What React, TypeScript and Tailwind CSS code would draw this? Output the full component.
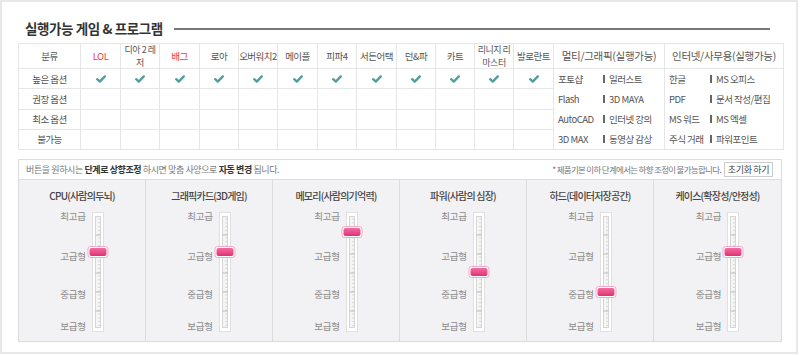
const games = [
  { name: "LOL", red: true },
  { name: "디아 2 레", name2: "저" },
  { name: "배그", red: true },
  { name: "로아" },
  { name: "오버워치2" },
  { name: "메이플" },
  { name: "피파4" },
  { name: "서든어택" },
  { name: "던&파" },
  { name: "카트" },
  { name: "리니지 리", name2: "마스터" },
  { name: "발로란트" },
];

const rows = ["높은 옵션", "권장 옵션", "최소 옵션", "불가능"];

const multi = [
  ["포토샵", "일러스트"],
  ["Flash", "3D MAYA"],
  ["AutoCAD", "인터넷 강의"],
  ["3D MAX", "동영상 감상"],
];

const office = [
  ["한글", "MS 오피스"],
  ["PDF", "문서 작성/편집"],
  ["MS 워드", "MS 엑셀"],
  ["주식 거래", "파워포인트"],
];

const parts = [
  { title: "CPU(사람의두뇌)", pos: 40 },
  { title: "그래픽카드(3D게임)", pos: 40 },
  { title: "메모리(사람의기억력)", pos: 20 },
  { title: "파워(사람의 심장)", pos: 60 },
  { title: "하드(데이터저장공간)", pos: 80 },
  { title: "케이스(확장성/안정성)", pos: 40 },
];

function Check() {
  return (
    <svg width="10" height="8" viewBox="0 0 10 8" className="mx-auto">
      <path
        d="M1.2 4.2 L3.8 6.6 L8.8 1.4"
        stroke="#4f9d9d"
        strokeWidth="2.3"
        fill="none"
        strokeLinecap="round"
        strokeLinejoin="round"
      />
    </svg>
  );
}

function Track() {
  const minor = [];
  for (let y = 7; y < 114; y += 3.8) minor.push(y);
  return (
    <svg width="12" height="120" viewBox="0 0 12 120">
      <rect x="0.5" y="0.5" width="11" height="119" fill="#fff" stroke="#e0e0e0" />
      <rect x="3.5" y="4.5" width="5" height="111" fill="#f5f5f5" stroke="#d6d6d6" />
      {minor.map((y) => (
        <line key={y} x1="6" x2="8.5" y1={y} y2={y} stroke="#d2d2d2" strokeWidth="0.8" />
      ))}
      {[23, 42, 61, 80, 99].map((y) => (
        <line key={y} x1="3.5" x2="8.5" y1={y} y2={y} stroke="#bbb" strokeWidth="1" />
      ))}
    </svg>
  );
}

function Pair({ items, w }: { items: string[][]; w: string }) {
  return (
    <div className="flex flex-col">
      {items.map(([a, b]) => (
        <div key={a} className="flex h-[20px] items-center whitespace-nowrap">
          <span className={w}>{a}</span>
          <span className="mr-[4px] inline-block h-[8px] w-[2px] bg-[#666]" />
          <span>{b}</span>
        </div>
      ))}
    </div>
  );
}

export default function App() {
  return (
    <div className="h-[355px] w-[800px] bg-white font-['Noto_Sans_CJK_KR','Noto_Sans',sans-serif]">
      <div className="h-[354px] w-[798px] border-2 border-[#e8e8e8] px-[16px] pt-[18px]">
        <div className="flex h-[18px] items-center pl-[7px] pr-[10px]">
          <h1 className="text-[13.5px] font-bold leading-none tracking-[-0.4px] text-[#333]">
            실행가능 게임 &amp; 프로그램
          </h1>
          <div className="ml-[11px] h-[2px] flex-1 bg-[#777]" />
        </div>

        <table className="mt-[5px] w-[765px] table-fixed border-collapse border border-[#cfcfcf] text-center text-[9.5px] tracking-[-0.5px] text-[#555]">
          <colgroup>
            <col className="w-[62px]" />
            <col className="w-[40px]" />
            <col className="w-[39px]" />
            <col className="w-[40px]" />
            <col className="w-[39px]" />
            <col className="w-[39px]" />
            <col className="w-[40px]" />
            <col className="w-[39px]" />
            <col className="w-[40px]" />
            <col className="w-[39px]" />
            <col className="w-[39px]" />
            <col className="w-[39px]" />
            <col className="w-[40px]" />
            <col className="w-[111px]" />
            <col className="w-[119px]" />
          </colgroup>
          <thead>
            <tr className="h-[25px]">
              <th className="border border-[#e6e6e6] p-0 font-normal">분류</th>
              {games.map((g) => (
                <th
                  key={g.name}
                  className={`border border-[#e6e6e6] p-0 font-normal whitespace-nowrap ${
                    g.red ? "text-[#f0383c]" : ""
                  }`}
                >
                  {g.name2 ? (
                    <div className="flex h-[24px] flex-col items-center justify-center text-[9px]">
                      <span className="leading-[13px]">{g.name}</span>
                      <span className="leading-[13px]">{g.name2}</span>
                    </div>
                  ) : (
                    g.name
                  )}
                </th>
              ))}
              <th className="border border-[#e6e6e6] p-0 text-[10.5px] font-normal tracking-[-0.3px]">
                멀티/그래픽(실행가능)
              </th>
              <th className="border border-[#e6e6e6] p-0 text-[10.5px] font-normal tracking-[-0.3px]">
                인터넷/사무용(실행가능)
              </th>
            </tr>
          </thead>
          <tbody>
            {rows.map((r, i) => (
              <tr key={r} className="h-[20px]">
                <td className="border border-[#e6e6e6] p-0">{r}</td>
                {games.map((g) => (
                  <td key={g.name} className="border border-[#e6e6e6] p-0">
                    {i === 0 && <Check />}
                  </td>
                ))}
                {i === 0 && (
                  <>
                    <td rowSpan={4} className="border border-[#e6e6e6] p-0 pl-[4px] text-left align-top">
                      <Pair items={multi} w="w-[45px]" />
                    </td>
                    <td rowSpan={4} className="border border-[#e6e6e6] p-0 pl-[4px] text-left align-top">
                      <Pair items={office} w="w-[41px]" />
                    </td>
                  </>
                )}
              </tr>
            ))}
          </tbody>
        </table>

        <div className="mt-[9px] w-[764px] border border-[#dcdcdc]">
          <div className="flex h-[19px] items-center justify-between pl-[7px] pr-[8px] text-[#777]">
            <p className="text-[9px] tracking-[-0.4px]">
              버튼을 원하시는 <b className="text-[#333]">단계로 상향조정</b> 하시면 맞춤 사양으로{" "}
              <b className="text-[#333]">자동 변경</b> 됩니다.
            </p>
            <div className="flex items-center gap-[3px] text-[8.5px] tracking-[-0.7px]">
              <span>* 제품기본 이하 단계에서는 하향 조정이 불가능합니다.</span>
              <span className="flex h-[15px] w-[49px] items-center justify-center border border-[#ccc] bg-white text-[9px] tracking-[-0.3px] text-[#444]">
                초기화 하기
              </span>
            </div>
          </div>
          <div className="grid grid-cols-6 border-t border-[#dcdcdc] bg-[#f2f2f4]">
            {parts.map((p, i) => (
              <div key={p.title} className={i < 5 ? "border-r border-[#dcdcdc]" : ""}>
                <div className="flex h-[30px] items-center justify-center text-[10px] font-medium tracking-[-0.8px] text-[#444]">
                  {p.title}
                </div>
                <div className="flex h-[131px] justify-center gap-[6px] pt-[2px]">
                  <div className="flex flex-col text-[9.5px] leading-[12px] tracking-[-0.2px] text-[#8a8a8a]">
                    <span className="mt-[-2px]">최고급</span>
                    <span className="mt-[28px]">고급형</span>
                    <span className="mt-[26px]">중급형</span>
                    <span className="mt-[20px]">보급형</span>
                  </div>
                  <div className="relative h-[120px] w-[12px]">
                    <Track />
                    <div
                      className="absolute left-1/2 h-[12px] w-[21px] -translate-x-1/2 rounded-[3px] border border-[#f3a9c7] bg-white p-[1px]"
                      style={{ top: p.pos - 6 }}
                    >
                      <div className="h-full rounded-[2px] bg-linear-to-b from-[#f46a9f] to-[#df2f76]" />
                    </div>
                  </div>
                </div>
              </div>
            ))}
          </div>
        </div>
      </div>
    </div>
  );
}
